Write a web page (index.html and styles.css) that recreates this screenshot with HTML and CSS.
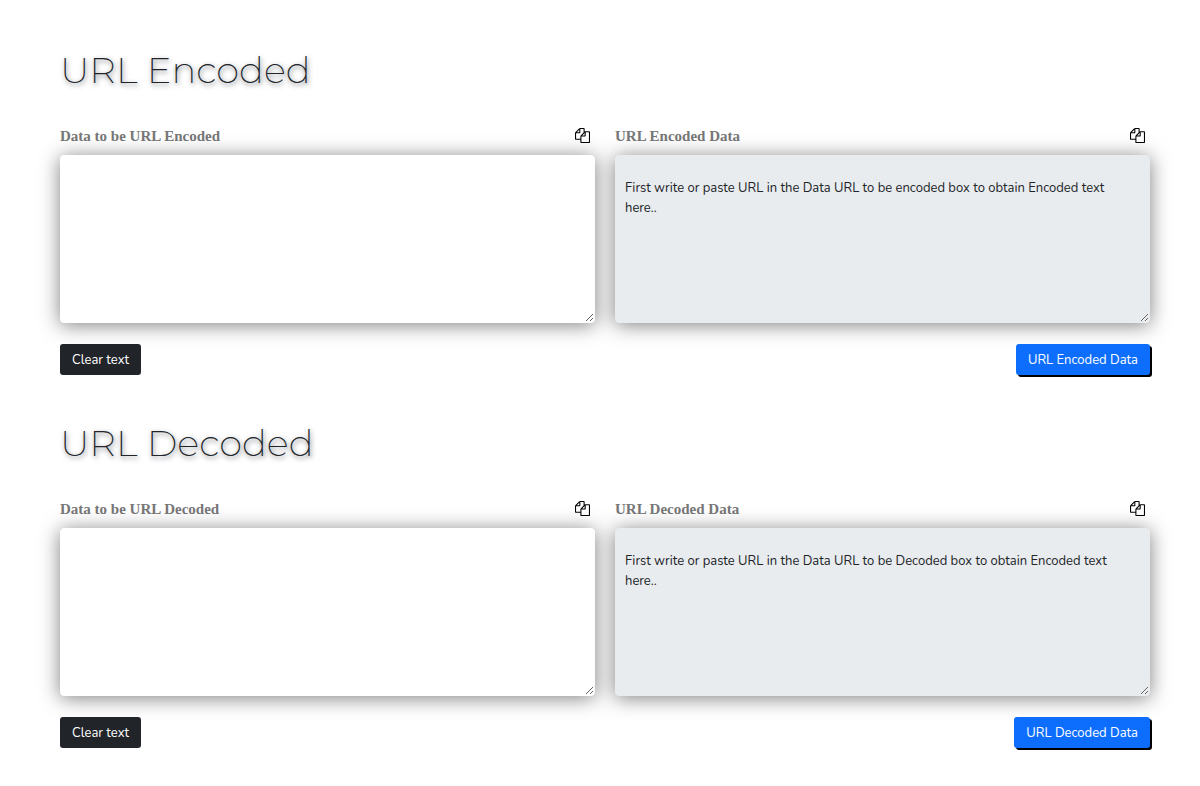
FILE: index.html
```html
<!DOCTYPE html>
<html lang="en">
<head>
  <meta charset="UTF-8">
  <meta name="viewport" content="width=device-width, initial-scale=1.0">
  <title>URL Encoder / Decoder</title>
  <link rel="stylesheet" href="styles.css">
</head>
<body>
  <!-- shared copy icon -->
  <svg class="sprite" aria-hidden="true">
    <symbol id="copy" viewBox="0 0 1792 1792">
      <path d="M1696 384q40 0 68 28t28 68v1216q0 40-28 68t-68 28h-960q-40 0-68-28t-28-68v-288h-544q-40 0-68-28t-28-68v-672q0-40 20-88t48-76l408-408q28-28 76-48t88-20h416q40 0 68 28t28 68v328q68-40 128-40h416zm-544 213l-299 299h299v-299zm-640-384l-299 299h299v-299zm196 647l316-316v-416h-384v416q0 40-28 68t-68 28h-416v640h512v-256q0-40 20-88t48-76zm956 804v-1152h-384v416q0 40-28 68t-68 28h-416v640h896z"/>
    </symbol>
  </svg>

  <main class="container">
    <!-- Encode -->
    <section class="tool">
      <h1>URL Encoded</h1>
      <div class="row">
        <div class="field">
          <div class="field-head">
            <label for="encodeInput">Data to be URL Encoded</label>
            <button type="button" class="copy" aria-label="Copy"><svg><use href="#copy"/></svg></button>
          </div>
          <textarea id="encodeInput"></textarea>
        </div>
        <div class="field">
          <div class="field-head">
            <label for="encodeOutput">URL Encoded Data</label>
            <button type="button" class="copy" aria-label="Copy"><svg><use href="#copy"/></svg></button>
          </div>
          <textarea id="encodeOutput" readonly>First write or paste URL in the Data URL to be encoded box to obtain Encoded text here..</textarea>
        </div>
      </div>
      <div class="actions">
        <button type="button" class="btn btn-dark">Clear text</button>
        <button type="button" class="btn btn-primary">URL Encoded Data</button>
      </div>
    </section>

    <!-- Decode -->
    <section class="tool">
      <h1>URL Decoded</h1>
      <div class="row">
        <div class="field">
          <div class="field-head">
            <label for="decodeInput">Data to be URL Decoded</label>
            <button type="button" class="copy" aria-label="Copy"><svg><use href="#copy"/></svg></button>
          </div>
          <textarea id="decodeInput"></textarea>
        </div>
        <div class="field">
          <div class="field-head">
            <label for="decodeOutput">URL Decoded Data</label>
            <button type="button" class="copy" aria-label="Copy"><svg><use href="#copy"/></svg></button>
          </div>
          <textarea id="decodeOutput" readonly>First write or paste URL in the Data URL to be Decoded box to obtain Encoded text here..</textarea>
        </div>
      </div>
      <div class="actions">
        <button type="button" class="btn btn-dark">Clear text</button>
        <button type="button" class="btn btn-primary">URL Decoded Data</button>
      </div>
    </section>
  </main>
</body>
</html>
```
FILE: styles.css
```css
* {
  box-sizing: border-box;
}

body {
  margin: 0;
  background: #fff;
  color: #212529;
  font-family: Nunito, "Open Sans", sans-serif;
  font-size: 13px;
  line-height: 20px;
}

.sprite {
  display: none;
}

.container {
  padding: 45px 50px 0 60px;
}

.tool {
  margin-bottom: 43px;
}

h1 {
  margin: 0 0 31px;
  font-family: Montserrat, Inter, sans-serif;
  font-size: 37px;
  font-weight: 200;
  line-height: 50px;
  text-shadow: 1px 2px 5px rgba(33, 37, 50, 0.7);
}

.row {
  display: grid;
  grid-template-columns: 1fr 1fr;
  gap: 20px;
}

.field {
  display: flex;
  flex-direction: column;
}

.field-head {
  display: flex;
  justify-content: space-between;
  padding-right: 5px;
  margin-bottom: 9px;
}

label {
  color: #777;
  font-family: "Liberation Serif", "Times New Roman", serif;
  font-size: 15px;
  font-weight: bold;
}

.copy {
  display: flex;
  align-items: center;
  padding: 0 0 2px;
  border: none;
  background: none;
  cursor: pointer;
}

.copy svg {
  width: 15px;
  height: 15px;
  fill: #000;
}

textarea {
  width: 100%;
  height: 168px;
  padding: 22px 20px 22px 9px;
  border: 1px solid #fff;
  border-radius: 4px;
  background: #fff;
  color: #212529;
  font: inherit;
  resize: vertical;
  box-shadow: 0 2px 20px rgba(0, 0, 0, 0.5);
}

textarea[readonly] {
  border-color: #e9ecef;
  background: #e9ecef;
}

.actions {
  display: flex;
  justify-content: space-between;
  margin-top: 21px;
}

.btn {
  padding: 6px 12px 5px;
  border: none;
  border-radius: 3px;
  color: #fff;
  font: inherit;
  cursor: pointer;
}

.btn-dark {
  background: #212529;
}

.btn-primary {
  background: #0d6efd;
  box-shadow: 2px 2px 0 #000;
}
```
